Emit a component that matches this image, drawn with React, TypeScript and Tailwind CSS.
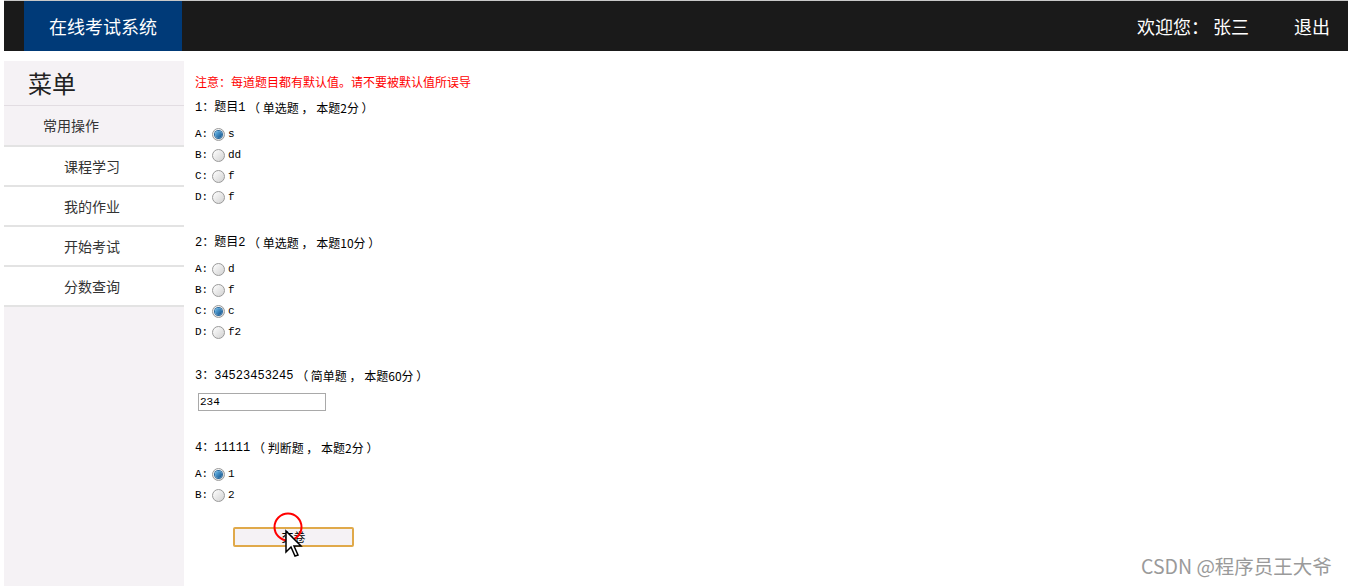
import React from "react";

type Question = {
  no: number;
  title: string;
  kind: string;
  score: number;
  options?: Array<{ key: string; text: string; checked?: boolean }>;
  answer?: string;
};

const QUESTIONS: Question[] = [
  {
    no: 1,
    title: "题目1",
    kind: "单选题",
    score: 2,
    options: [
      { key: "A", text: "s", checked: true },
      { key: "B", text: "dd" },
      { key: "C", text: "f" },
      { key: "D", text: "f" },
    ],
  },
  {
    no: 2,
    title: "题目2",
    kind: "单选题",
    score: 10,
    options: [
      { key: "A", text: "d" },
      { key: "B", text: "f" },
      { key: "C", text: "c", checked: true },
      { key: "D", text: "f2" },
    ],
  },
  { no: 3, title: "34523453245", kind: "简单题", score: 60, answer: "234" },
  {
    no: 4,
    title: "11111",
    kind: "判断题",
    score: 2,
    options: [
      { key: "A", text: "1", checked: true },
      { key: "B", text: "2" },
    ],
  },
];

const MENU = ["课程学习", "我的作业", "开始考试", "分数查询"];

const uiFont = { fontFamily: '"Noto Sans CJK SC", "Noto Sans", sans-serif' };
const monoFont = { fontFamily: '"Liberation Mono", "Noto Sans CJK SC", monospace' };

function Radio({ checked }: { checked?: boolean }) {
  return (
    <span className="relative inline-flex h-[13px] w-[13px] items-center justify-center rounded-full border border-[#9a9a9a] bg-gradient-to-br from-white to-[#d2d2d2]">
      {checked && (
        <span className="h-[7px] w-[7px] rounded-full bg-gradient-to-br from-[#6ec0f0] to-[#0a4f8a] shadow-[0_0_0_1px_#2a6a9e]" />
      )}
    </span>
  );
}

function QuestionBlock({ q, gap }: { q: Question; gap: string }) {
  return (
    <div className={gap}>
      <div className="flex h-[21px] items-center text-[12px] text-black" style={monoFont}>
        {q.no}：{q.title}
        <span style={uiFont}>&nbsp;（ {q.kind} ， 本题{q.score}分 ）</span>
      </div>
      {q.options && (
        <div className="mt-[6px]">
          {q.options.map((o) => (
            <div key={o.key} className="flex h-[21px] items-center text-[11px] text-black" style={monoFont}>
              <span className="w-[17px]">{o.key}:</span>
              <Radio checked={o.checked} />
              <span className="ml-[3px]">{o.text}</span>
            </div>
          ))}
        </div>
      )}
      {q.answer !== undefined && (
        <div className="ml-[3px] mt-[7px] flex h-[18px] w-[128px] items-center border border-[#a9a9a9] bg-white px-[1px] text-[11px] text-black" style={monoFont}>
          {q.answer}
        </div>
      )}
    </div>
  );
}

const GAPS = ["mt-[5px]", "mt-[24px]", "mt-[22px]", "mt-[26px]"];

export default function App() {
  return (
    <div className="relative min-h-[586px] w-[1348px] overflow-hidden bg-white" style={uiFont}>
      <header className="ml-[4px] flex h-[51px] items-stretch border-t border-[#c8c8c8] bg-[#1a1a1a]">
        <div className="ml-[20px] flex w-[158px] items-center justify-center bg-[#003a78] text-[18px] text-white">
          在线考试系统
        </div>
        <div className="flex-1" />
        <div className="flex items-center text-[18px] text-white">
          <span>欢迎您： 张三</span>
          <span className="ml-[45px] mr-[18px]">退出</span>
        </div>
      </header>

      <div className="mt-[10px] flex">
        <aside className="ml-[4px] flex min-h-[525px] w-[180px] flex-col bg-[#f5f2f5]">
          <div className="flex h-[45px] items-center border-b border-[#e2dde2] pl-[24px] text-[24px] text-[#222]">菜单</div>
          <div className="flex h-[39px] items-center pl-[39px] text-[14px] text-[#333]">常用操作</div>
          {MENU.map((m) => (
            <div key={m} className="flex h-[40px] items-center border-t-2 border-[#e3e3e3] bg-white pl-[60px] text-[14px] text-[#333]">
              {m}
            </div>
          ))}
          <div className="border-t-2 border-[#e3e3e3]" />
        </aside>

        <main className="pl-[11px] pt-[10px]">
          <div className="flex h-[21px] items-center text-[12px] text-[#ff0000]">注意：每道题目都有默认值。请不要被默认值所误导</div>
          {QUESTIONS.map((q, i) => (
            <QuestionBlock key={q.no} q={q} gap={GAPS[i]} />
          ))}
          <button className="ml-[38px] mt-[21px] flex h-[20px] w-[121px] items-center justify-center rounded-[2px] border-2 border-[#e0a94a] bg-[#f5f2f5] text-[12px] text-black">
            交卷
          </button>
        </main>
      </div>

      {/* click marker and cursor from the recording */}
      <svg className="pointer-events-none absolute left-[272px] top-[512px]" width="40" height="48" viewBox="0 0 40 48">
        <circle cx="16" cy="15" r="13.5" fill="none" stroke="#ff0000" strokeWidth="2" />
        <path d="M14 19 L14 40 L19 35 L23 44 L26 43 L22 34 L29 34 Z" fill="#fff" stroke="#000" strokeWidth="1.5" strokeLinejoin="miter" />
      </svg>

      <div className="absolute left-[1141px] top-[551px] text-[19.5px] text-[#9a9a9a]">CSDN @程序员王大爷</div>
    </div>
  );
}
